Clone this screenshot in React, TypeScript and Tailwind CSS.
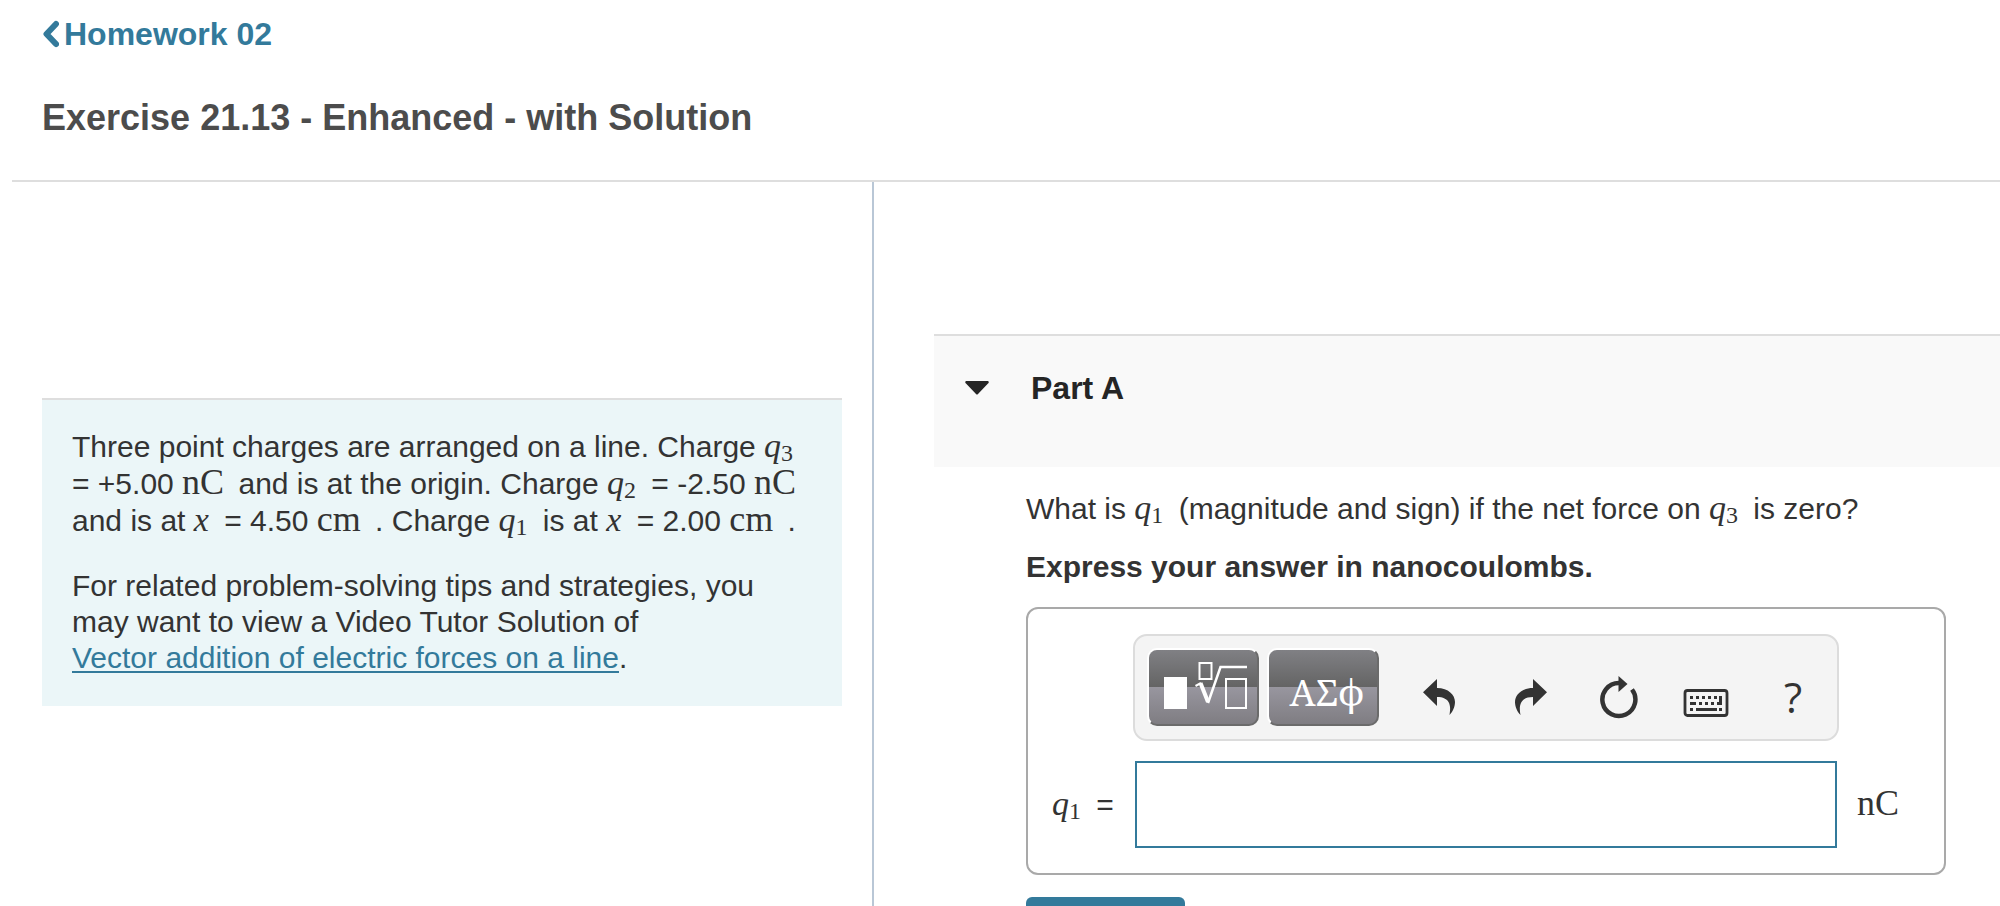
import type { ReactNode } from "react";

interface MathProps {
	children: ReactNode;
	sub?: string;
}

// upright symbols, used for the units
function Unit({ children }: MathProps) {
	return <span className="mr-[6px] whitespace-nowrap font-['Liberation_Serif',serif] text-[36px] leading-0">{children}</span>;
}

// italic variables with an optional subscript
function Variable({ children, sub }: MathProps) {
	return (
		<span className="mr-[7px] whitespace-nowrap font-['Liberation_Serif',serif] text-[34px] leading-0">
			<i>{children}</i>
			{sub && <sub className="bottom-0 top-1 text-[24px]">{sub}</sub>}
		</span>
	);
}

function Header() {
	return (
		<header className="ml-3 border-b-2 border-[#dedede] px-[30px] pb-[42px] pt-4">
			<a href="#" className="inline-flex items-center gap-[5px] text-[32px] font-bold leading-9 text-[#337a9b]">
				<svg width="17" height="28" viewBox="0 0 17 28" fill="none" aria-hidden="true">
					<path d="M14 4 L4.500 14 L14 24" stroke="currentColor" strokeWidth="6" strokeLinecap="round" strokeLinejoin="round" />
				</svg>
				Homework 02
			</a>
			<h1 className="mt-[42px] text-[36px] font-bold leading-10 text-[#4c4c4c]">
				Exercise 21.13 - Enhanced - with Solution
			</h1>
		</header>
	);
}

function Problem() {
	return (
		<section className="mx-[30px] border-t-2 border-[#dedede] bg-[#ebf6f8] px-[30px] pb-[30px] pt-7">
			<p className="leading-[37px]">
				Three point charges are arranged on a line. Charge <Variable sub="3">q</Variable>
				<br />= +5.00 <Unit>nC</Unit> and is at the origin. Charge <Variable sub="2">q</Variable> = -2.50{" "}
				<Unit>nC</Unit>
				<br />and is at <Variable>x</Variable> = 4.50 <Unit>cm</Unit> . Charge{" "}
				<Variable sub="1">q</Variable> is at <Variable>x</Variable> = 2.00 <Unit>cm</Unit> .
			</p>
			<p className="mt-[29px]">
				For related problem-solving tips and strategies, you may want to view a Video Tutor Solution of{" "}
				<span className="inline-block">
					<a href="#" className="text-[#337a9b] underline decoration-2 underline-offset-[3px] [text-decoration-skip-ink:none]">
						Vector addition of electric forces on a line
					</a>
					.
				</span>
			</p>
		</section>
	);
}

const bevel =
	"h-[78px] w-[112px] shrink-0 rounded-[10px] border-2 border-t-white border-l-white border-r-[#6b6b6b] border-b-[#6b6b6b] bg-[linear-gradient(to_bottom,#808084_0%,#646464_50%,#98969f_50%,#7f7d82_100%)]";
const tool = "flex h-11 w-[88px] shrink-0 items-center justify-center";

function Toolbar() {
	return (
		<div className="-mx-[2px] flex h-[107px] items-start rounded-[14px] border-2 border-[#dcdcdc] bg-[#f4f4f4] pl-3 pt-3">
			<button type="button" aria-label="Templates" className={bevel}>
				<svg width="108" height="74" viewBox="0 0 108 74" fill="none" stroke="#fff" strokeWidth="2">
					<rect x="15" y="27" width="23" height="32" fill="#fff" stroke="none" />
					<rect x="50.500" y="13" width="12" height="16" />
					<path d="M46.500 36 L52 33" />
					<path d="M51.500 33 L59 52" strokeWidth="4" />
					<path d="M59 53 L71.500 17 H98" strokeWidth="2.500" />
					<rect x="77" y="29" width="20" height="29" />
				</svg>
			</button>
			<button
				type="button"
				aria-label="Symbols"
				className={bevel + " ml-2 pl-2 pt-2 font-['Noto_Serif','Liberation_Serif',serif] text-[37px] leading-none text-white"}
			>
				ΑΣϕ
			</button>
			<div className="ml-5 flex items-center pt-[27px]">
				<button type="button" aria-label="Undo" className={tool}>
					<svg width="40" height="44" viewBox="0 0 40 44" fill="#333">
						<path d="M0 17.300 L14 4 V13 C25.500 13 32 20 32 27 C32 32 29.500 37 26.500 40 C28.500 30 26.500 22 14 22 V31 Z" />
					</svg>
				</button>
				<button type="button" aria-label="Redo" className={tool}>
					<svg width="32" height="44" viewBox="0 0 32 44" fill="#333">
						<path d="M32 17.300 L18 4 V13 C6.500 13 0 20 0 27 C0 32 2.500 37 5.500 40 C3.500 30 5.500 22 18 22 V31 Z" />
					</svg>
				</button>
				<button type="button" aria-label="Reset" className={tool}>
					<svg width="40" height="44" viewBox="0 0 40 44" fill="none">
						<path d="M33 14.500 A16.500 16.500 0 1 1 20 8" stroke="#333" strokeWidth="4.500" />
						<path d="M19.500 1 L28.500 9 L19.500 17 Z" fill="#333" />
					</svg>
				</button>
				<button type="button" aria-label="Keyboard shortcuts" className={tool}>
					<svg width="48" height="44" viewBox="0 0 48 44" fill="#333">
						<rect x="2" y="15.500" width="42" height="25" rx="2.500" fill="none" stroke="#333" strokeWidth="2.800" />
						<path d="M7 21h3v3h-3z M13 21h3v3h-3z M19 21h3v3h-3z M25 21h3v3h-3z M31 21h3v3h-3z M36 21h3v9h-5v-3h2z M7 27h6v3h-6z M16 27h3v3h-3z M22 27h3v3h-3z M28 27h3v3h-3z M7 33h3v3h-3z M13 33h21v3h-21z M36 33h3v3h-3z" />
					</svg>
				</button>
				<button
					type="button"
					aria-label="Help"
					className="h-11 w-[84px] shrink-0 font-['Open_Sans',sans-serif] text-[42px] leading-10 text-[#333333]"
				>
					?
				</button>
			</div>
		</div>
	);
}

function AnswerBox() {
	return (
		<div className="mt-[22px] grid grid-cols-[107px_1fr_107px] items-center gap-y-5 rounded-[12px] border-2 border-[#a9a9a9] py-[25px]">
			<div className="col-start-2">
				<Toolbar />
			</div>
			<label htmlFor="answer" className="col-start-1 pl-6">
				<Variable sub="1">q</Variable> =
			</label>
			<input
				id="answer"
				type="text"
				className="h-[87px] w-full border-2 border-[#337a9b] bg-white px-3 outline-none"
			/>
			<span className="pl-5">
				<Unit>nC</Unit>
			</span>
		</div>
	);
}

function PartA() {
	return (
		<section>
			<div className="flex h-[133px] items-start border-t-2 border-[#dedede] bg-[#f9f9f9] pl-[31px] pt-8">
				<button type="button" aria-expanded="true" className="flex items-center gap-[42px] text-[32px] font-bold leading-10 text-[#252525]">
					<svg width="24" height="14" viewBox="0 0 24 14" fill="currentColor" aria-hidden="true">
						<path d="M1 0 H23 Q24.500 1 23 2.500 L13 13 Q12 14 11 13 L1 2.500 Q-0.500 1 1 0 Z" />
					</svg>
					Part A
				</button>
			</div>
			<div className="pl-[92px] pr-[54px] pt-6">
				<p>
					What is <Variable sub="1">q</Variable> (magnitude and sign) if the net force on{" "}
					<Variable sub="3">q</Variable> is zero?
				</p>
				<p className="mt-[22px] font-bold">Express your answer in nanocoulombs.</p>
				<AnswerBox />
				<button type="button" className="mt-[22px] h-16 w-[159px] rounded-[6px] bg-[#337a9b]" aria-label="Submit" />
			</div>
		</section>
	);
}

export default function App() {
	return (
		<div className="h-screen overflow-hidden bg-white font-['Liberation_Sans',Arial,sans-serif] text-[30px] leading-9 text-[#333333]">
			<Header />
			<main className="ml-3 grid h-full grid-cols-[862fr_1126fr]">
				<div className="border-r-2 border-[#b9c7d6] pt-[216px]">
					<Problem />
				</div>
				<div className="pl-[60px] pt-[152px]">
					<PartA />
				</div>
			</main>
		</div>
	);
}
